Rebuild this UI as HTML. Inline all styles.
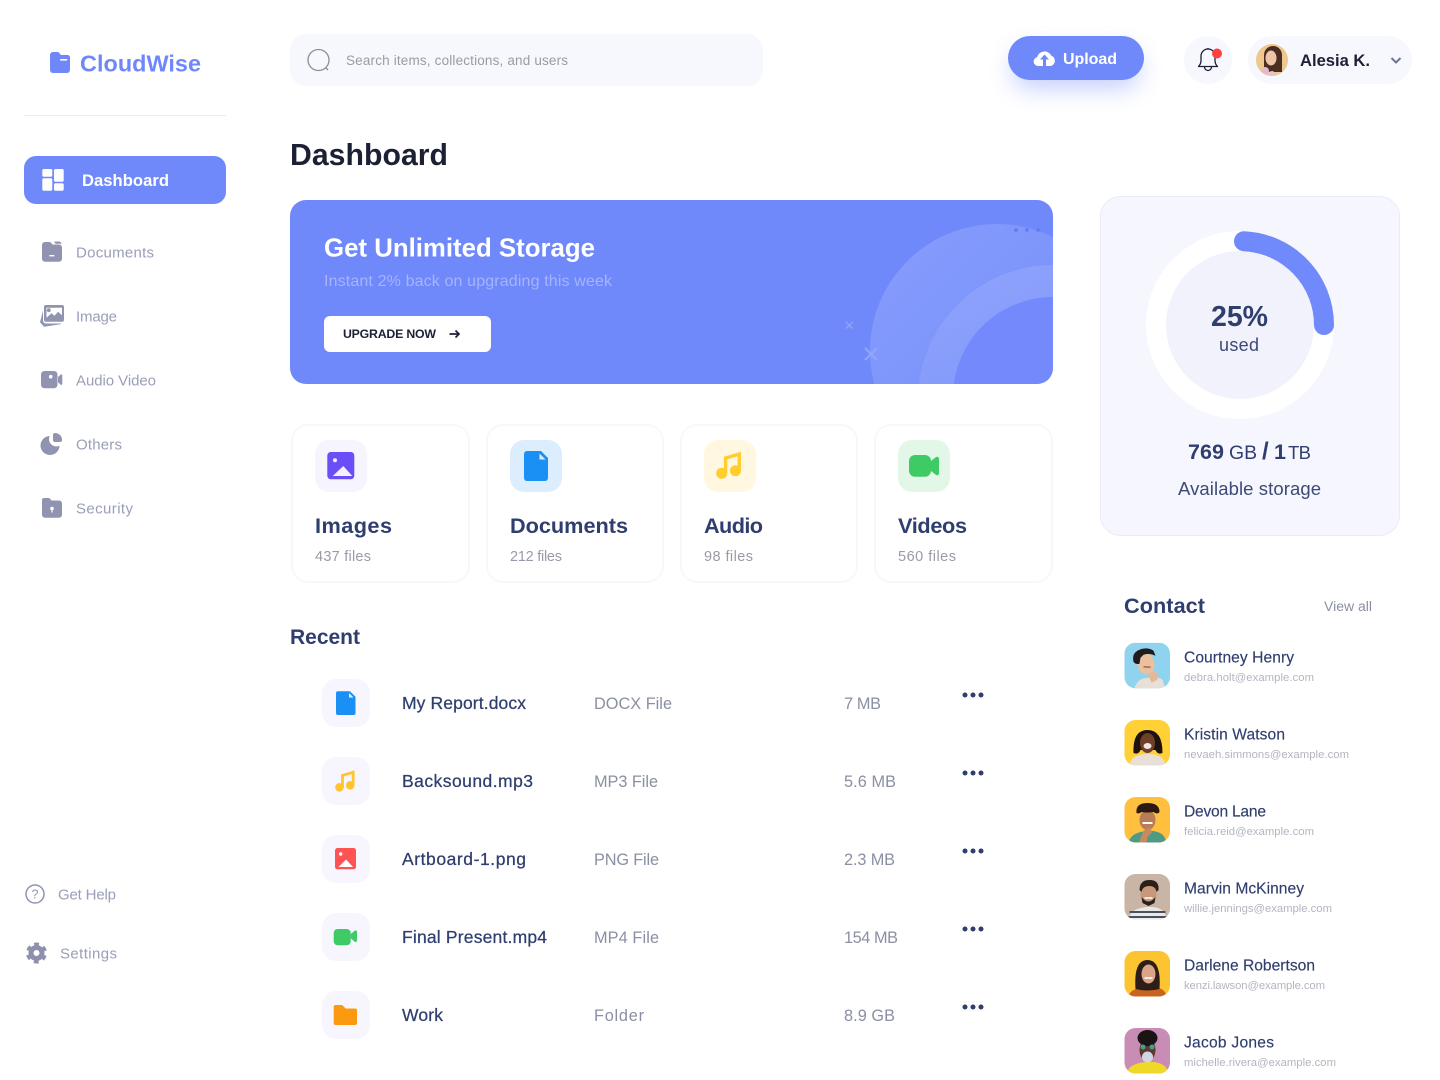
<!DOCTYPE html>
<html lang="en"><head><meta charset="utf-8"><title>CloudWise Dashboard</title>
<style>
html,body{margin:0;padding:0;background:#fff;width:1440px;height:1080px;overflow:hidden}
svg{display:block}
text{font-family:"Liberation Sans",Arial,sans-serif;white-space:pre}
.b{font-weight:700}
.nav{font-size:15px;fill:#9a9eb8}
.t{font-size:21.7px;font-weight:700;fill:#2f3e6e}
.f{font-size:14.5px;fill:#9a9aa8}
.n{font-size:17.5px;fill:#2f3e6e;stroke:#2f3e6e;stroke-width:.25}
.k{font-size:16.3px;fill:#8a8fa3}
.c{font-size:15.6px;fill:#2f3e6e;stroke:#2f3e6e;stroke-width:.15}
.e{font-size:11.3px;fill:#b3b5c0}
</style></head><body>
<svg width="1440" height="1080" viewBox="0 0 1440 1080" xmlns="http://www.w3.org/2000/svg">
<defs>
<filter id="sh" x="-40%" y="-80%" width="180%" height="300%"><feGaussianBlur stdDeviation="12"/></filter>
<linearGradient id="g1" x1="0" y1="0" x2="1" y2="1"><stop offset="0" stop-color="#fff" stop-opacity=".17"/><stop offset=".6" stop-color="#fff" stop-opacity=".07"/><stop offset="1" stop-color="#fff" stop-opacity="0"/></linearGradient>
<linearGradient id="g2" x1="0" y1="0" x2="0" y2="1"><stop offset="0" stop-color="#fff" stop-opacity=".11"/><stop offset=".7" stop-color="#fff" stop-opacity=".05"/></linearGradient>
<clipPath id="ban"><rect x="290" y="200" width="763" height="184" rx="16"/></clipPath>
<clipPath id="av"><rect width="45.500" height="45.500" rx="11"/></clipPath>
<clipPath id="avu"><circle cx="1272" cy="60" r="16"/></clipPath>
</defs>

<!-- Sidebar -->
<path fill="#6f87fb" d="M53 52h4.500a2 2 0 0 1 1.500.7l2 2.300h6.500a2.500 2.500 0 0 1 2.500 2.500V70a3 3 0 0 1-3 3H53a3 3 0 0 1-3-3V55a3 3 0 0 1 3-3z"/>
<rect x="60" y="59" width="7.500" height="1.600" rx=".8" fill="#fff"/>
<text x="80" y="71.500" class="b" font-size="23.400" fill="#6f87fb" textLength="121">CloudWise</text>
<rect x="24" y="115" width="202" height="1" fill="#e9ebf5"/>
<rect x="24" y="156" width="202" height="48" rx="12" fill="#6f89fb"/>
<g fill="#fff"><rect x="42.300" y="169" width="10" height="7.700" rx="1.500"/><rect x="42.300" y="178.300" width="10" height="12.400" rx="1.500"/><rect x="54" y="169" width="9.700" height="12.700" rx="1.500"/><rect x="54" y="183.300" width="9.700" height="7.400" rx="1.500"/></g>
<text x="82" y="186" class="b" font-size="16.600" fill="#fff" textLength="87">Dashboard</text>

<g fill="#9094b0">
<path d="M45 242h4.500a2 2 0 0 1 1.500.7l1.500 1.800h6.500a3 3 0 0 1 3 3v11.200a3 3 0 0 1-3 3H45a3 3 0 0 1-3-3V245a3 3 0 0 1 3-3z"/>
<path d="M54 241.500h5a3 3 0 0 1 2.500 2.200h-6z"/>
<path fill-rule="evenodd" d="M46 305h16a2 2 0 0 1 2 2v12.700a2 2 0 0 1-2 2H46a2 2 0 0 1-2-2V307a2 2 0 0 1 2-2zm.5 2.200v10.500l5-4.500 3 2.500 3.500-4 4 3.500v-7.500h-15.500z"/>
<circle cx="48.800" cy="310.200" r="1.900"/>
<path d="M43 310.500v10a3 3 0 0 0 3 3h15v.6L44 326.700l-4-4.500z"/>
<path d="M44.500 371H54a3.500 3.500 0 0 1 3.500 3.500v10.300a3.500 3.500 0 0 1-3.500 3.500h-9.500a3.500 3.500 0 0 1-3.500-3.500v-10.300a3.500 3.500 0 0 1 3.500-3.500zM58 377l2.500-2.300a1.100 1.100 0 0 1 1.800.8v8.300a1.100 1.100 0 0 1-1.800.8L58 382.300z"/>
<circle cx="50" cy="445.500" r="9.500"/>
<path d="M44 498h4.500a2 2 0 0 1 1.500.7l1.500 1.800h7.500a3 3 0 0 1 3 3v11.200a3 3 0 0 1-3 3H45a3 3 0 0 1-3-3V500a2 2 0 0 1 2-2z"/>
</g>
<circle cx="56.500" cy="439" r="7.500" fill="#fff"/>
<path d="M53 434.500a2 2 0 0 1 2-1.500 7 7 0 0 1 7 7 2 2 0 0 1-1.500 2H55a2 2 0 0 1-2-2z" fill="#9094b0"/>
<rect x="49.300" y="255" width="5" height="1.400" fill="#fff"/>
<circle cx="50.700" cy="376.700" r="1.800" fill="#fff"/>
<circle cx="52" cy="508.500" r="1.800" fill="#fff"/><rect x="51.400" y="509.500" width="1.200" height="3" fill="#fff"/>

<text x="76" y="257.500" class="nav" textLength="78">Documents</text>
<text x="76" y="321.500" class="nav" textLength="41">Image</text>
<text x="76" y="385.500" class="nav" textLength="80">Audio Video</text>
<text x="76" y="449.500" class="nav" textLength="46">Others</text>
<text x="76" y="513.500" class="nav" textLength="57">Security</text>

<circle cx="35" cy="894" r="9" fill="none" stroke="#9094b0" stroke-width="1.500"/>
<text x="35" y="898.500" text-anchor="middle" font-size="12.500" fill="#9094b0">?</text>
<text x="58" y="899.500" class="nav" textLength="58">Get Help</text>
<circle cx="36.500" cy="953" r="5.500" fill="none" stroke="#8d91ad" stroke-width="5"/>
<circle cx="36.500" cy="953" r="9" fill="none" stroke="#8d91ad" stroke-width="3" stroke-dasharray="4.800 4.625" transform="rotate(-105 36.500 953)"/>
<text x="60" y="958.500" class="nav" textLength="57">Settings</text>

<!-- Top bar -->
<rect x="290" y="34" width="473" height="52" rx="16" fill="#f7f8fe"/>
<circle cx="318.500" cy="60" r="10.500" fill="none" stroke="#8b8d96" stroke-width="1.300"/>
<path d="M326 68l2 2" stroke="#8b8d96" stroke-width="1.300"/>
<text x="346" y="65" font-size="13.500" fill="#9a9aa5" textLength="222">Search items, collections, and users</text>

<rect x="1012" y="50" width="128" height="38" rx="19" fill="#6f89fb" opacity=".42" filter="url(#sh)"/>
<rect x="1008" y="36" width="136" height="44" rx="22" fill="#6f89fb"/>
<path fill="#fff" d="M1039 66h-1a4.500 4.500 0 0 1-.8-8.900 7.500 7.500 0 0 1 14-1.500 5.500 5.500 0 0 1-.2 10.400h-2z"/>
<path fill="#6f89fb" d="M1044.500 54.500l-4.500 5h3v7h3v-7h3z"/>
<text x="1063" y="64" class="b" font-size="16" fill="#fff" textLength="54">Upload</text>

<circle cx="1208" cy="60" r="24" fill="#f7f8fe"/>
<path d="M1198.500 66.500c1.500-1.500 2.500-3.500 2.500-6V56a7 7 0 0 1 14 0v4.500c0 2.500 1 4.500 2.500 6z" fill="none" stroke="#1c2035" stroke-width="1.300" stroke-linejoin="round"/>
<path d="M1208 49v-1" stroke="#1c2035" stroke-width="1.300"/>
<path d="M1204.500 67a3.500 3.500 0 0 0 7 0" fill="none" stroke="#1c2035" stroke-width="1.300"/>
<circle cx="1217" cy="53.500" r="5" fill="#ff4040"/>

<rect x="1248" y="36" width="164" height="48" rx="24" fill="#f7f8fe"/>
<g clip-path="url(#avu)">
<rect x="1256" y="44" width="32" height="32" fill="#efc88e"/>
<path d="M1264 72V55a9 9 0 0 1 18 0v17z" fill="#4a2e22"/>
<ellipse cx="1271" cy="58" rx="5.500" ry="7.500" fill="#efc5a8"/>
<path d="M1264 76q7-9 14 0z" fill="#efc5a8"/>
<circle cx="1265" cy="71" r="4" fill="#e8b8c8"/><circle cx="1272" cy="74" r="3" fill="#e3c5cc"/>
</g>
<text x="1300" y="66" class="b" font-size="16.600" fill="#1c2035" textLength="70">Alesia K.</text>
<path d="M1391.500 58l4.500 4.500 4.500-4.500" fill="none" stroke="#6b7390" stroke-width="2"/>

<text x="290" y="165" class="b" font-size="30.200" fill="#1c2035" textLength="158">Dashboard</text>

<!-- Banner -->
<g clip-path="url(#ban)">
<rect x="290" y="200" width="763" height="184" fill="#6f89fb"/>
<circle cx="997" cy="351" r="127" fill="url(#g1)"/>
<circle cx="1053" cy="400" r="135" fill="url(#g2)"/>
<circle cx="1053" cy="397" r="100" fill="#7489fb"/>
<g fill="#6479f0"><circle cx="1016" cy="230" r="1.800"/><circle cx="1027" cy="230" r="1.800"/><circle cx="1038" cy="230" r="1.800"/></g>
<path d="M846 322l6.500 6.500M852.500 322l-6.500 6.500" stroke="#8fa2fb" stroke-width="1.500"/>
<path d="M865 348l12 12M877 348l-12 12" stroke="#93a5fb" stroke-width="2.200"/>
</g>
<text x="324" y="256.500" class="b" font-size="25.800" fill="#fff" textLength="271">Get Unlimited Storage</text>
<text x="324" y="286" font-size="16" fill="#a5b4fc" textLength="288">Instant 2% back on upgrading this week</text>
<rect x="324" y="316" width="167" height="36" rx="6" fill="#fff"/>
<text x="343" y="338" class="b" font-size="12.300" fill="#1c2035" textLength="93">UPGRADE NOW</text>
<path d="M449.500 334h9.500M455.500 330.500l3.500 3.500-3.500 3.500" fill="none" stroke="#1c2035" stroke-width="1.700"/>

<!-- Category cards -->
<g fill="#fff" stroke="#f8f8fb" stroke-width="2">
<rect x="292" y="425" width="177" height="157" rx="16"/>
<rect x="487" y="425" width="176" height="157" rx="16"/>
<rect x="681" y="425" width="176" height="157" rx="16"/>
<rect x="875" y="425" width="177" height="157" rx="16"/>
</g>
<rect x="315" y="440" width="52" height="52" rx="14" fill="#f6f4ff"/>
<rect x="510" y="440" width="52" height="52" rx="14" fill="#dcedfd"/>
<rect x="704" y="440" width="52" height="52" rx="14" fill="#fff7e0"/>
<rect x="898" y="440" width="52" height="52" rx="14" fill="#e2f7e8"/>

<rect x="327.300" y="452" width="27" height="27.300" rx="3.500" fill="#6c4ef7"/>
<circle cx="335" cy="460.300" r="2" fill="#f3f0ff"/>
<path d="M332.700 476l10.600-10 9 10z" fill="#f3f0ff"/>

<path d="M527 451h14l7 7v20a3 3 0 0 1-3 3h-18a3 3 0 0 1-3-3v-24a3 3 0 0 1 3-3z" fill="#1a90f5"/>
<path d="M539.500 453.500l6 6h-6z" fill="#dcedfd"/>

<g transform="translate(716 452)" fill="#ffcd2e"><circle cx="5.700" cy="21.300" r="5.500"/><circle cx="19.500" cy="18.700" r="5.500"/><path d="M9.600 21V6L23.300 2V18" fill="none" stroke="#ffcd2e" stroke-width="3.400"/></g>

<rect x="909" y="455" width="22" height="21.700" rx="6" fill="#3ecb66"/>
<path d="M931 461l5-4a2 2 0 0 1 3 1.500v15a2 2 0 0 1-3 1.500l-5-4z" fill="#3ecb66"/>

<text x="315" y="533" class="t" textLength="77">Images</text>
<text x="510" y="533" class="t" textLength="118">Documents</text>
<text x="704" y="533" class="t" textLength="59">Audio</text>
<text x="898" y="533" class="t" textLength="69">Videos</text>
<text x="315" y="561" class="f" textLength="56">437 files</text>
<text x="510" y="561" class="f" textLength="52">212 files</text>
<text x="704" y="561" class="f" textLength="49">98 files</text>
<text x="898" y="561" class="f" textLength="58">560 files</text>

<!-- Recent -->
<text x="290" y="644" class="b" font-size="21" fill="#2f3e6e" textLength="70">Recent</text>
<g fill="#f7f6ff">
<rect x="322" y="679" width="48" height="48" rx="14"/><rect x="322" y="757" width="48" height="48" rx="14"/><rect x="322" y="835" width="48" height="48" rx="14"/><rect x="322" y="913" width="48" height="48" rx="14"/><rect x="322" y="991" width="48" height="48" rx="14"/>
</g>
<path d="M338 691.300h12l5.500 5.500V713a2 2 0 0 1-2 2H338a2 2 0 0 1-2-2V693.300a2 2 0 0 1 2-2z" fill="#1a90f5"/>
<path d="M349 693l4.500 4.500H349z" fill="#dcedfd"/>
<g transform="translate(335 770.700) scale(.78)" fill="#ffc42e"><circle cx="5.700" cy="21.300" r="5.500"/><circle cx="19.500" cy="18.700" r="5.500"/><path d="M9.600 21V6L23.300 2V18" fill="none" stroke="#ffc42e" stroke-width="3.600"/></g>
<rect x="335" y="848" width="21" height="21.300" rx="2.500" fill="#ff5252"/>
<circle cx="340.700" cy="854" r="1.700" fill="#fff"/><path d="M338.500 867l7.500-7.500 7 7.500z" fill="#fff"/>
<rect x="333.700" y="929" width="17" height="16.300" rx="4" fill="#3ecb66"/>
<path d="M350.700 934l3.500-2.800a1.500 1.500 0 0 1 2.800 1v8a1.500 1.500 0 0 1-2.800 1l-3.500-2.800z" fill="#3ecb66"/>
<path d="M335.700 1005h6.500l3.500 3.500h9.300a2 2 0 0 1 2 2V1023a2 2 0 0 1-2 2h-19.300a2 2 0 0 1-2-2v-16a2 2 0 0 1 2-2z" fill="#fb9a10"/>

<text x="402" y="709" class="n" textLength="124">My Report.docx</text>
<text x="402" y="787" class="n" textLength="131">Backsound.mp3</text>
<text x="402" y="865" class="n" textLength="124">Artboard-1.png</text>
<text x="402" y="943" class="n" textLength="145">Final Present.mp4</text>
<text x="402" y="1021" class="n" textLength="41">Work</text>

<text x="594" y="709" class="k" textLength="78">DOCX File</text>
<text x="594" y="787" class="k" textLength="64">MP3 File</text>
<text x="594" y="865" class="k" textLength="65">PNG File</text>
<text x="594" y="943" class="k" textLength="65">MP4 File</text>
<text x="594" y="1021" class="k" textLength="50">Folder</text>

<text x="844" y="709" class="k" textLength="37">7 MB</text>
<text x="844" y="787" class="k" textLength="52">5.6 MB</text>
<text x="844" y="865" class="k" textLength="51">2.3 MB</text>
<text x="844" y="943" class="k" textLength="54">154 MB</text>
<text x="844" y="1021" class="k" textLength="51">8.9 GB</text>

<g fill="#2f3e6e">
<circle cx="965" cy="695" r="2.500"/><circle cx="973" cy="695" r="2.500"/><circle cx="981" cy="695" r="2.500"/>
<circle cx="965" cy="773" r="2.500"/><circle cx="973" cy="773" r="2.500"/><circle cx="981" cy="773" r="2.500"/>
<circle cx="965" cy="851" r="2.500"/><circle cx="973" cy="851" r="2.500"/><circle cx="981" cy="851" r="2.500"/>
<circle cx="965" cy="929" r="2.500"/><circle cx="973" cy="929" r="2.500"/><circle cx="981" cy="929" r="2.500"/>
<circle cx="965" cy="1007" r="2.500"/><circle cx="973" cy="1007" r="2.500"/><circle cx="981" cy="1007" r="2.500"/>
</g>

<!-- Storage -->
<rect x="1100.500" y="196.500" width="299" height="339" rx="20" fill="#f6f7fe" stroke="#e9ebf6"/>
<circle cx="1240" cy="325" r="94" fill="#fff"/>
<circle cx="1240" cy="325" r="74" fill="#f1f2fb"/>
<path d="M1244 241.200A84 84 0 0 1 1324 325" fill="none" stroke="#7089fb" stroke-width="20" stroke-linecap="round"/>
<text x="1211" y="326" class="b" font-size="28.500" fill="#2f3e6e" textLength="57">25%</text>
<text x="1219" y="351" font-size="18" fill="#3c4a75" textLength="40">used</text>
<text x="1188" y="459" class="b" font-size="21.500" fill="#2f3e6e" textLength="36">769</text>
<text x="1229" y="459" font-size="19.400" fill="#2f3e6e" textLength="28">GB</text>
<text x="1262" y="459" class="b" font-size="24" fill="#2f3e6e">/</text>
<text x="1274" y="459" class="b" font-size="21.500" fill="#2f3e6e">1</text>
<text x="1288" y="459" font-size="18.500" fill="#2f3e6e" textLength="23">TB</text>
<text x="1178" y="495" font-size="18.500" fill="#3c4a75" textLength="143">Available storage</text>

<!-- Contacts -->
<text x="1124" y="613" class="b" font-size="21.700" fill="#2f3e6e" textLength="81">Contact</text>
<text x="1324" y="611" font-size="14" fill="#8a8fa3" textLength="48">View all</text>

<g transform="translate(1124.500 642.700)" clip-path="url(#av)">
<rect width="46" height="46" fill="#8fd3ee"/>
<path d="M10 46q2-10 13-11t15 2l3 9z" fill="#e6e0d8"/>
<ellipse cx="21.500" cy="21" rx="8.500" ry="11" fill="#e9c0a0" transform="rotate(-10 21.500 21)"/>
<path d="M9 19q-2-9 6-12t14 1l2 5q-6-3-12-1l-3 3-1 6q-4 1-6-2z" fill="#221b1b"/>
<path d="M24 33l5-5 3 1 1 8-6 3z" fill="#e6b795"/>
<path d="M19 24l7 .500" stroke="#a8624d" stroke-width="1.500"/>
</g>
<g transform="translate(1124.500 720)" clip-path="url(#av)">
<rect width="46" height="46" fill="#ffd137"/>
<path d="M5 46q1-12 18-12t18 12z" fill="#e8e0d8"/>
<path d="M9 33q-1-23 14-23t15 23q-5 2-7-3H16q-2 5-7 3z" fill="#1e120e"/>
<ellipse cx="23" cy="23" rx="7.500" ry="10" fill="#6e402a"/>
<ellipse cx="23" cy="26" rx="4" ry="3" fill="#f2e6e4"/>
</g>
<g transform="translate(1124.500 797)" clip-path="url(#av)">
<rect width="46" height="46" fill="#ffbf3f"/>
<path d="M4 46q2-11 19-12t19 12z" fill="#4f9a85"/>
<ellipse cx="23" cy="23" rx="8" ry="10" fill="#b97c55"/>
<path d="M12 16q-1-10 11-10t12 9q-2 3-6 0-6 1-12 0-2 2-5 1z" fill="#2a1a12"/>
<path d="M18 26h10" stroke="#fff" stroke-width="2"/>
<path d="M14 46l5-12 6-4 3 5-5 5-1 6z" fill="#c68a60"/>
</g>
<g transform="translate(1124.500 874)" clip-path="url(#av)">
<rect width="46" height="46" fill="#c9b5a5"/>
<path d="M4 46q1-12 19-13t19 13z" fill="#e8e8e8"/>
<path d="M5 38h36M4 43h38" stroke="#4a505c" stroke-width="2"/>
<ellipse cx="24" cy="20" rx="8" ry="10" fill="#c89878"/>
<path d="M15 16q0-10 10-10t9 10l-2 2q-1-6-7-6-7 0-8 6zM17 23q7 9 14 0l-1 6-6 3-6-3z" fill="#2b1f1a"/>
<path d="M20 24h8" stroke="#fff" stroke-width="1.500"/>
</g>
<g transform="translate(1124.500 951)" clip-path="url(#av)">
<rect width="46" height="46" fill="#fbc430"/>
<path d="M4 46q1-9 19-10t19 10z" fill="#c8641e"/>
<path d="M11 38q-2-29 12-29t12 29q-12 3-24 0z" fill="#2e1e18"/>
<ellipse cx="24" cy="23" rx="7" ry="9.500" fill="#d9a488"/>
<path d="M20 27h8" stroke="#fff" stroke-width="1.500"/>
</g>
<g transform="translate(1124.500 1028)" clip-path="url(#av)">
<rect width="46" height="46" fill="#c98cb5"/>
<path d="M2 46q2-11 21-12t21 12z" fill="#f0d828"/>
<ellipse cx="23" cy="22" rx="8" ry="11" fill="#5a3a2c"/>
<ellipse cx="23" cy="10" rx="10" ry="8" fill="#1a1414"/>
<circle cx="18.500" cy="19" r="2.500" fill="#4a9a90"/><circle cx="27.500" cy="19" r="2.500" fill="#4a9a90"/>
<circle cx="23" cy="29" r="5.500" fill="#cfd5e5"/>
</g>

<text x="1184" y="662.500" class="c" textLength="110">Courtney Henry</text>
<text x="1184" y="739.500" class="c" textLength="101">Kristin Watson</text>
<text x="1184" y="816.500" class="c" textLength="82">Devon Lane</text>
<text x="1184" y="893.500" class="c" textLength="120">Marvin McKinney</text>
<text x="1184" y="970.500" class="c" textLength="131">Darlene Robertson</text>
<text x="1184" y="1047.500" class="c" textLength="90">Jacob Jones</text>
<text x="1184" y="681" class="e" textLength="130">debra.holt@example.com</text>
<text x="1184" y="758" class="e" textLength="165">nevaeh.simmons@example.com</text>
<text x="1184" y="835" class="e" textLength="130">felicia.reid@example.com</text>
<text x="1184" y="912" class="e" textLength="148">willie.jennings@example.com</text>
<text x="1184" y="989" class="e" textLength="141">kenzi.lawson@example.com</text>
<text x="1184" y="1066" class="e" textLength="152">michelle.rivera@example.com</text>
</svg>
</body></html>
